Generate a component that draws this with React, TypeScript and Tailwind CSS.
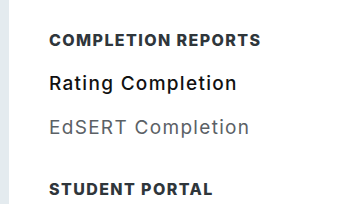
export default function App() {
  return (
    <div className="flex h-[204px] w-[357px] overflow-hidden bg-white" style={{ fontFamily: 'Inter, "Open Sans", sans-serif' }}>
      <div className="w-[9px] shrink-0 bg-[#e4ebef]" />
      <nav className="flex flex-col pl-[40px] pt-[31px]">
        <h3 className="text-[16px] font-extrabold uppercase leading-[18px] tracking-[1.4px] text-[#2f363b]">
          Completion Reports
        </h3>
        <a className="mt-[23px] text-[19px] font-medium leading-[24px] tracking-[1.3px] text-[#111111]">Rating Completion</a>
        <a className="mt-[20px] text-[19px] leading-[24px] tracking-[1.3px] text-[#5b6166]">EdSERT Completion</a>
        <h3 className="mt-[40px] text-[16px] font-extrabold uppercase leading-[18px] tracking-[1.4px] text-[#2f363b]">
          Student Portal
        </h3>
      </nav>
    </div>
  )
}
